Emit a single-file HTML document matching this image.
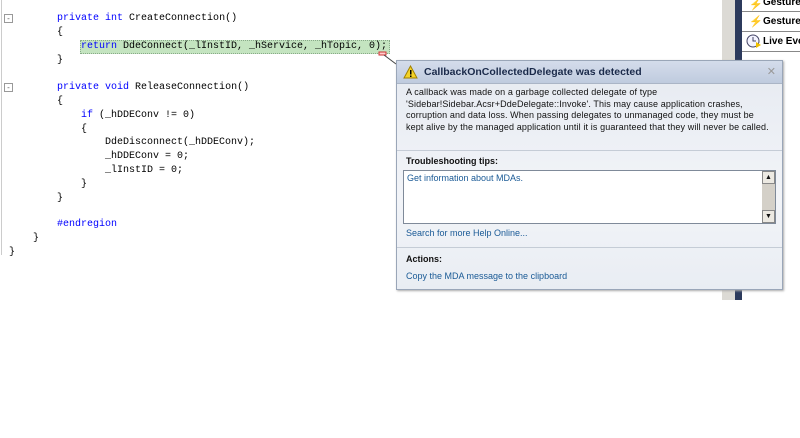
<!DOCTYPE html>
<html><head><style>
body{margin:0;width:800px;height:438px;background:#fff;position:relative;overflow:hidden;font-family:"Liberation Sans",sans-serif}
.code{position:absolute;left:0;top:0;font-family:"Liberation Mono",monospace;font-size:10px;color:#000;white-space:pre}
.l{position:absolute;height:14px;line-height:14px}
.k{color:#0000ff}
.m{position:absolute;left:4px;width:7px;height:7px;border:1px solid #999;background:#fff;font-size:8px;line-height:7px;text-align:center;color:#555}
.pop{position:absolute;left:396px;top:60px;width:385px;height:228px;border:1px solid #9aa6b8;background:linear-gradient(#e6eaf1,#f2f4f8 60%,#e9edf3);box-shadow:1px 1px 2px #aaa;font-size:9px;color:#111}
.hd{height:22px;background:linear-gradient(#d4dceb,#bfcbde);border-bottom:1px solid #aab5c6;position:relative}
.a{color:#1a5a96}
.r{position:absolute;left:763px;font-size:10px;font-weight:bold;white-space:nowrap}
</style></head><body>
<div style="position:absolute;left:722px;top:0;width:13px;height:300px;background:#dcdad5"></div>
<div style="position:absolute;left:735px;top:0;width:7px;height:300px;background:#2c3a5c"></div>
<div style="position:absolute;left:742px;top:0;width:58px;height:52px;background:#fff"></div>
<div style="position:absolute;left:742px;top:11px;width:58px;height:1px;background:#888"></div>
<div style="position:absolute;left:742px;top:31px;width:58px;height:1px;background:#888"></div>
<div style="position:absolute;left:742px;top:51px;width:58px;height:1px;background:#888"></div>
<div class="r" style="top:-3px">Gesture</div>
<div class="r" style="top:16px">Gesture</div>
<div class="r" style="top:36px">Live Eve</div>
<div style="position:absolute;left:749px;top:-2px;color:#e0a000;font-size:11px">⚡</div>
<div style="position:absolute;left:749px;top:15px;color:#e0a000;font-size:11px">⚡</div>
<svg style="position:absolute;left:746px;top:34px" width="16" height="15"><circle cx="7" cy="7" r="6" fill="#f4f4ff" stroke="#446"/><path d="M7 3V7H10" stroke="#446" fill="none"/><polygon points="10,8 15,11 10,14" fill="#f0c000"/></svg>
<div style="position:absolute;left:1px;top:0;width:1px;height:255px;background:#ccc"></div>
<div class="m" style="top:14px">-</div><div class="m" style="top:83px">-</div>
<div class="code">
<div class="l" style="left:57px;top:12px"><span class="k">private</span> <span class="k">int</span> CreateConnection()</div>
<div class="l" style="left:57px;top:26px">{</div>
<div class="l" style="left:80px;top:40px;background:#c4e4c0;border:1px dotted #8a8;height:12px;line-height:12px;padding-right:2px"><span class="k">return</span> DdeConnect(_lInstID, _hService, _hTopic, 0);</div>
<div class="l" style="left:57px;top:54px">}</div>
<div class="l" style="left:57px;top:81px"><span class="k">private</span> <span class="k">void</span> ReleaseConnection()</div>
<div class="l" style="left:57px;top:95px">{</div>
<div class="l" style="left:81px;top:109px"><span class="k">if</span> (_hDDEConv != 0)</div>
<div class="l" style="left:81px;top:123px">{</div>
<div class="l" style="left:105px;top:136px">DdeDisconnect(_hDDEConv);</div>
<div class="l" style="left:105px;top:150px">_hDDEConv = 0;</div>
<div class="l" style="left:105px;top:164px">_lInstID = 0;</div>
<div class="l" style="left:81px;top:178px">}</div>
<div class="l" style="left:57px;top:192px">}</div>
<div class="l" style="left:57px;top:218px;color:#0000ff">#endregion</div>
<div class="l" style="left:33px;top:232px">}</div>
<div class="l" style="left:9px;top:246px">}</div>
</div>
<svg style="position:absolute;left:378px;top:49px" width="22" height="16"><rect x="1" y="3" width="7" height="3" fill="#fcc" stroke="#c33" stroke-width="1"/><line x1="6" y1="6" x2="18" y2="15" stroke="#444"/></svg>
<div class="pop">
<div class="hd">
<svg style="position:absolute;left:6px;top:4px" width="15" height="14"><polygon points="7.5,1 14,13 1,13" fill="#f5d327" stroke="#a08000"/><rect x="7" y="5" width="1.5" height="4.5" fill="#000"/><rect x="7" y="10.5" width="1.5" height="1.5" fill="#000"/></svg>
<div style="position:absolute;left:27px;top:5px;font-size:10.5px;font-weight:bold;color:#1a2a4a">CallbackOnCollectedDelegate was detected</div>
<div style="position:absolute;right:6px;top:4px;color:#999;font-size:11px">✕</div>
</div>
<div style="position:absolute;left:9px;top:26px;line-height:11.5px;font-size:9px;letter-spacing:0.12px;white-space:nowrap">A callback was made on a garbage collected delegate of type<br>'Sidebar!Sidebar.Acsr+DdeDelegate::Invoke'. This may cause application crashes,<br>corruption and data loss. When passing delegates to unmanaged code, they must be<br>kept alive by the managed application until it is guaranteed that they will never be called.</div>
<div style="position:absolute;left:0;top:89px;width:385px;height:1px;background:#c5ccd6"></div>
<div style="position:absolute;left:9px;top:95px;font-weight:bold;font-size:9px">Troubleshooting tips:</div>
<div style="position:absolute;left:6px;top:109px;width:371px;height:52px;background:#fff;border:1px solid #7f8a99">
<div class="a" style="position:absolute;left:3px;top:2px;font-size:9px">Get information about MDAs.</div>
<div style="position:absolute;right:0;top:0;width:13px;height:52px;background:#d4d0c8">
<div style="height:13px;background:#ece9e2;border:1px solid #888;box-sizing:border-box;font-size:7px;text-align:center;line-height:11px">▲</div>
<div style="position:absolute;bottom:0;width:13px;height:13px;background:#ece9e2;border:1px solid #888;box-sizing:border-box;font-size:7px;text-align:center;line-height:11px">▼</div></div>
</div>
<div class="a" style="position:absolute;left:9px;top:167px;font-size:9px">Search for more Help Online...</div>
<div style="position:absolute;left:0;top:186px;width:385px;height:1px;background:#c5ccd6"></div>
<div style="position:absolute;left:9px;top:193px;font-weight:bold">Actions:</div>
<div class="a" style="position:absolute;left:9px;top:210px;font-size:9px">Copy the MDA message to the clipboard</div>
</div>
</body></html>
